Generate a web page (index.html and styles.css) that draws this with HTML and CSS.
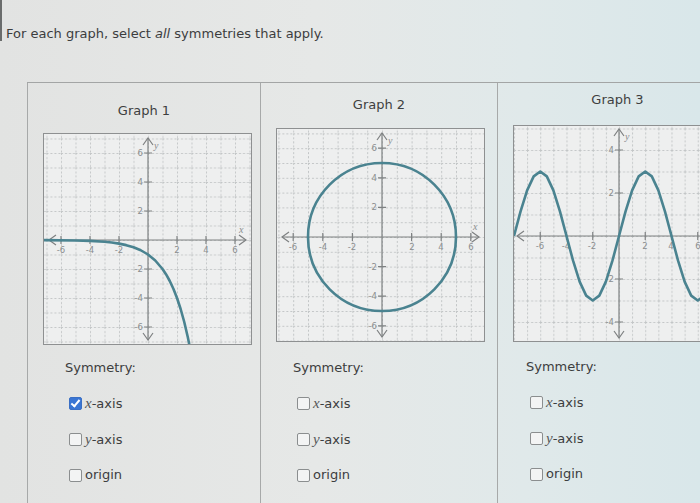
FILE: index.html
```html
<!DOCTYPE html>
<html>
<head>
<meta charset="utf-8">
<link rel="stylesheet" href="styles.css">
</head>
<body>
<div class="page">
  <p class="prompt">For each graph, select <i>all</i> symmetries that apply.</p>
  <div class="panel">
    <section class="col col-1">
      <h2 class="title">Graph 1</h2>
      <svg class="graph" width="207" height="210" viewBox="0 0 207 210">
        <defs>
          <pattern id="g1" x="104" y="106" width="14.5" height="14.5" patternUnits="userSpaceOnUse">
            <path d="M0 0.5H14.5M0.5 0V14.5" class="grid"/>
          </pattern>
        </defs>
        <rect width="207" height="210" fill="url(#g1)"/>
        <g class="axis">
          <path d="M5 106H202M104 4V206"/>
          <polyline points="12,101 5,106 12,111"/>
          <polyline points="195,101 202,106 195,111"/>
          <polyline points="99,11 104,4 109,11"/>
          <polyline points="99,199 104,206 109,199"/>
          <path d="M17 102V110M46 102V110M75 102V110M133 102V110M162 102V110M191 102V110"/>
          <path d="M100 19H108M100 48H108M100 77H108M100 135H108M100 164H108M100 193H108"/>
        </g>
        <g class="lbl">
          <text x="17" y="119">-6</text><text x="46" y="119">-4</text><text x="75" y="119">-2</text>
          <text x="133" y="119">2</text><text x="162" y="119">4</text><text x="191" y="119">6</text>
        </g>
        <g class="lbl ylbl">
          <text x="99" y="22">6</text><text x="99" y="51">4</text><text x="99" y="80">2</text>
          <text x="99" y="138">-2</text><text x="99" y="167">-4</text><text x="99" y="196">-6</text>
        </g>
        <text class="var" x="195" y="99">x</text>
        <text class="var" x="110" y="15">y</text>
        <g transform="translate(104,106) scale(14.5)">
          <polyline class="curve" points="-7.4,0.006 -5,0.031 -4,0.0625 -3,0.125 -2.5,0.177 -2,0.25 -1.5,0.354 -1,0.5 -0.5,0.707 0,1 0.5,1.414 1,2 1.25,2.378 1.5,2.828 1.75,3.364 2,4 2.25,4.757 2.5,5.657 2.75,6.727 2.95,7.73"/>
        </g>
      </svg>
      <div class="sym">
        <p class="sym-label">Symmetry:</p>
        <label class="opt"><span class="box checked"></span><span class="txt"><i class="m">x</i>-axis</span></label>
        <label class="opt"><span class="box"></span><span class="txt"><i class="m">y</i>-axis</span></label>
        <label class="opt"><span class="box"></span><span class="txt">origin</span></label>
        <label class="opt"><span class="box"></span><span class="txt">none of these</span></label>
      </div>
    </section>

    <section class="col col-2">
      <h2 class="title">Graph 2</h2>
      <svg class="graph" width="207" height="212" viewBox="0 0 207 212">
        <defs>
          <pattern id="g2" x="105" y="108" width="14.8" height="14.8" patternUnits="userSpaceOnUse">
            <path d="M0 0.5H14.8M0.5 0V14.8" class="grid"/>
          </pattern>
        </defs>
        <rect width="207" height="212" fill="url(#g2)"/>
        <g class="axis">
          <path d="M5 108H202M105 4V208"/>
          <polyline points="12,103 5,108 12,113"/>
          <polyline points="195,103 202,108 195,113"/>
          <polyline points="100,11 105,4 110,11"/>
          <polyline points="100,201 105,208 110,201"/>
          <path d="M16.2 104V112M45.8 104V112M75.4 104V112M134.6 104V112M164.2 104V112M193.8 104V112"/>
          <path d="M101 19.2H109M101 48.8H109M101 78.4H109M101 137.6H109M101 167.2H109M101 196.8H109"/>
        </g>
        <g class="lbl">
          <text x="16" y="121">-6</text><text x="46" y="121">-4</text><text x="75" y="121">-2</text>
          <text x="135" y="121">2</text><text x="164" y="121">4</text><text x="194" y="121">6</text>
        </g>
        <g class="lbl ylbl">
          <text x="100" y="22">6</text><text x="100" y="52">4</text><text x="100" y="81">2</text>
          <text x="100" y="141">-2</text><text x="100" y="170">-4</text><text x="100" y="200">-6</text>
        </g>
        <text class="var" x="196" y="101">x</text>
        <text class="var" x="111" y="15">y</text>
        <circle class="curve" cx="105" cy="108" r="74"/>
      </svg>
      <div class="sym">
        <p class="sym-label">Symmetry:</p>
        <label class="opt"><span class="box"></span><span class="txt"><i class="m">x</i>-axis</span></label>
        <label class="opt"><span class="box"></span><span class="txt"><i class="m">y</i>-axis</span></label>
        <label class="opt"><span class="box"></span><span class="txt">origin</span></label>
        <label class="opt"><span class="box"></span><span class="txt">none of these</span></label>
      </div>
    </section>

    <section class="col col-3">
      <h2 class="title">Graph 3</h2>
      <svg class="graph" width="210" height="215" viewBox="0 0 210 215">
        <defs>
          <pattern id="g3" x="105" y="110" width="13.125" height="21.5" patternUnits="userSpaceOnUse">
            <path d="M0 0.5H13.125M0.5 0V21.5" class="grid"/>
          </pattern>
        </defs>
        <rect width="210" height="215" fill="url(#g3)"/>
        <g class="axis">
          <path d="M3 110H207M105 3V212"/>
          <polyline points="10,105 3,110 10,115"/>
          <polyline points="100,10 105,3 110,10"/>
          <polyline points="100,205 105,212 110,205"/>
          <path d="M26.25 106V114M52.5 106V114M78.75 106V114M131.25 106V114M157.5 106V114M183.75 106V114"/>
          <path d="M101 24H109M101 67H109M101 153H109M101 196H109"/>
        </g>
        <g class="lbl">
          <text x="26" y="123">-6</text><text x="52" y="123">-4</text><text x="78" y="123">-2</text>
          <text x="131" y="123">2</text><text x="157" y="123">4</text><text x="184" y="123">6</text>
        </g>
        <g class="lbl ylbl">
          <text x="100" y="27">4</text><text x="100" y="70">2</text>
          <text x="100" y="156">-2</text><text x="100" y="199">-4</text>
        </g>
        <text class="var" x="111" y="14">y</text>
        <g transform="translate(105,110) scale(13.125,21.5)">
          <polyline class="curve" points="-8,0 -7.5,-1.148 -7,-2.121 -6.5,-2.772 -6,-3 -5.5,-2.772 -5,-2.121 -4.5,-1.148 -4,0 -3.5,1.148 -3,2.121 -2.5,2.772 -2,3 -1.5,2.772 -1,2.121 -0.5,1.148 0,0 0.5,-1.148 1,-2.121 1.5,-2.772 2,-3 2.5,-2.772 3,-2.121 3.5,-1.148 4,0 4.5,1.148 5,2.121 5.5,2.772 6,3 6.5,2.772 7,2.121 7.5,1.148 8,0"/>
        </g>
      </svg>
      <div class="sym">
        <p class="sym-label">Symmetry:</p>
        <label class="opt"><span class="box"></span><span class="txt"><i class="m">x</i>-axis</span></label>
        <label class="opt"><span class="box"></span><span class="txt"><i class="m">y</i>-axis</span></label>
        <label class="opt"><span class="box"></span><span class="txt">origin</span></label>
        <label class="opt"><span class="box"></span><span class="txt">none of these</span></label>
      </div>
    </section>
  </div>
</div>
</body>
</html>
```
FILE: styles.css
```css
html, body {
  margin: 0;
  padding: 0;
}
body {
  width: 700px;
  height: 503px;
  overflow: hidden;
  font-family: "DejaVu Sans", Verdana, sans-serif;
  color: #3c3d3e;
  background: linear-gradient(90deg, #e2e3e2 0%, #e6e8e7 45%, #e0e9ea 75%, #d9e7ea 100%);
}
.page {
  width: 700px;
  height: 503px;
  overflow: hidden;
}
.prompt {
  margin: 0;
  padding: 26px 0 0 4px;
  font-size: 13px;
  line-height: 16px;
  border-left: 2px solid #6a6c6c;
  height: 41px;
  box-sizing: border-box;
  width: 340px;
}
.panel {
  margin: 41px 0 0 27px;
  border-top: 1px solid #a3a5a5;
  display: grid;
  grid-template-columns: 233px 237px 240px;
  height: 420px;
}
.col {
  border-left: 1px solid #a7a9a9;
  display: flex;
  flex-direction: column;
  --title-top: 14px;
  --graph-top: 15px;
  --sym-top: 18px;
  --sym-left: 36px;
}
.col-1 {
  --title-top: 20px;
  --graph-top: 14px;
  --sym-top: 15px;
  --sym-left: 41px;
}
.col-2 {
  --title-top: 14px;
  --graph-top: 15px;
  --sym-top: 18px;
  --sym-left: 36px;
}
.col-3 {
  --title-top: 9px;
  --graph-top: 17px;
  --sym-top: 17px;
  --sym-left: 32px;
}
.title {
  margin: var(--title-top) 0 0 0;
  font-size: 13px;
  font-weight: normal;
  line-height: 16px;
  text-align: center;
  color: #3e3f40;
}
.graph {
  display: block;
  margin: var(--graph-top) 0 0 15px;
  border: 1px solid #8e9091;
  background: #eeefef;
  flex: none;
}
.grid {
  fill: none;
  stroke: #c3c6c7;
  stroke-width: 1;
  stroke-dasharray: 2 2;
}
.axis {
  fill: none;
  stroke: #7e8182;
  stroke-width: 1.2;
}
.lbl text {
  font-family: "DejaVu Sans", sans-serif;
  font-size: 8.5px;
  fill: #8a8d8e;
  text-anchor: middle;
}
.ylbl text {
  text-anchor: end;
}
.var {
  font-family: "Liberation Serif", serif;
  font-style: italic;
  font-size: 10px;
  fill: #8a8d8e;
}
.curve {
  fill: none;
  stroke: #4a8390;
  stroke-width: 2.6;
  stroke-linejoin: round;
  vector-effect: non-scaling-stroke;
}
.sym {
  padding-left: var(--sym-left);
  display: flex;
  flex-direction: column;
  gap: 19px;
  margin-top: var(--sym-top);
}
.sym-label {
  margin: 0 0 0 -4px;
  font-size: 13px;
  line-height: 16px;
}
.opt {
  display: flex;
  align-items: center;
  font-size: 13px;
  line-height: 16px;
  gap: 3px;
}
.txt {
  white-space: nowrap;
}
.box {
  width: 11px;
  height: 11px;
  border: 1px solid #8b8e8f;
  border-radius: 2px;
  background: #f3f4f4;
  position: relative;
  flex: none;
}
.box.checked {
  background: #3a76d4;
  border-color: #3a6fc4;
}
.box.checked::after {
  content: "";
  position: absolute;
  left: 3px;
  top: 0px;
  width: 3px;
  height: 7px;
  border: solid #ffffff;
  border-width: 0 2px 2px 0;
  transform: rotate(40deg);
}
.m {
  font-family: "Liberation Serif", serif;
  font-size: 15px;
  color: #555758;
}
```
